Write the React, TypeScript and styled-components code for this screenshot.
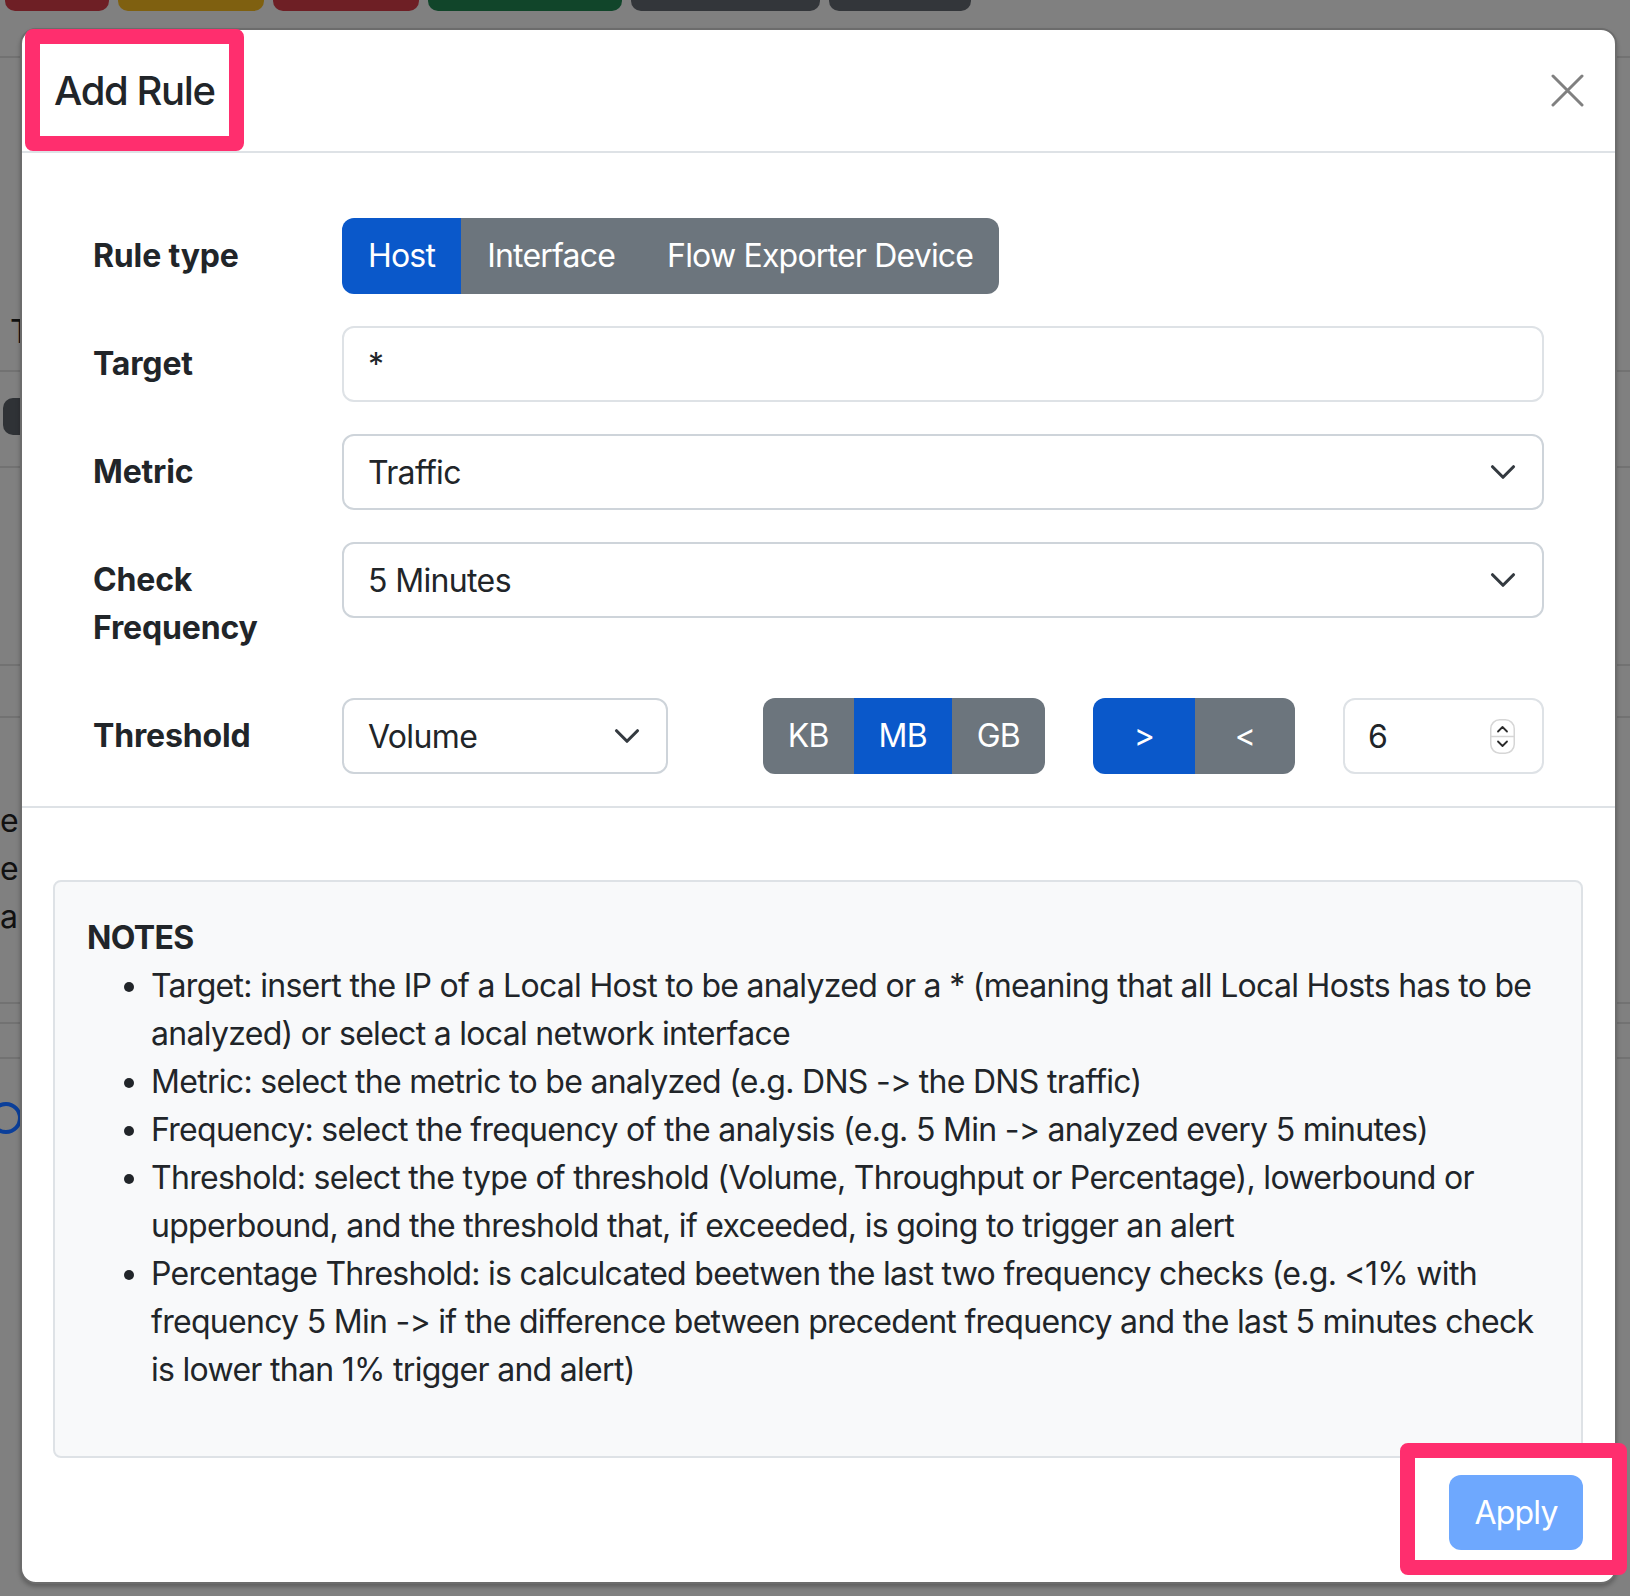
import React from "react";
import styled, { createGlobalStyle } from "styled-components";

const GlobalStyle = createGlobalStyle`
  html, body {
    margin: 0;
    padding: 0;
  }
  body {
    width: 1630px;
    height: 1596px;
    overflow: hidden;
    background: #808080;
    font-family: Inter, "Noto Sans", "Liberation Sans", sans-serif;
    color: #212529;
    -webkit-font-smoothing: antialiased;
  }
`;

// ---------- page behind the backdrop ----------

const Page = styled.div`
  position: relative;
  width: 1630px;
  height: 1596px;
  overflow: hidden;
  background: #808080;
`;

const BadgeRow = styled.div`
  display: flex;
  gap: 9px;
  padding-left: 5px;
  height: 11px;
`;

const Badge = styled.div<{ $color: string; $width: number }>`
  width: ${(p) => p.$width}px;
  height: 11px;
  background: ${(p) => p.$color};
  border-radius: 0 0 10px 10px;
`;

const Section = styled.div<{ $height: number }>`
  display: flow-root;
  height: ${(p) => p.$height}px;
  box-sizing: border-box;
  border-bottom: 2px solid #727272;
  font-size: 32px;
  line-height: 48px;
  color: #111;
`;

const BackText = styled.div`
  padding: 250px 0 0 10px;
`;

const BackPill = styled.div`
  margin: 26px 0 0 3px;
  width: 60px;
  height: 37px;
  border-radius: 10px;
  background: #2f3236;
`;

const BackParagraph = styled.div`
  padding-top: 79px;
  white-space: nowrap;
`;

const BackIcon = styled.div`
  margin: 43px 0 0 -10px;
  width: 24px;
  height: 24px;
  border: 4px solid #0b3f9a;
  border-radius: 50%;
`;

// ---------- modal ----------

const Modal = styled.div`
  position: absolute;
  left: 20px;
  top: 28px;
  width: 1597px;
  height: 1556px;
  box-sizing: border-box;
  background: #fff;
  border: 2px solid #6c6c6c;
  border-radius: 16px;
  display: flex;
  flex-direction: column;
  box-shadow: 0 3px 4px rgba(0, 0, 0, 0.25);
  overflow: hidden;
`;

const Header = styled.div`
  height: 121px;
  flex: none;
  display: flex;
  align-items: center;
  justify-content: space-between;
  padding: 0 31px 0 32px;
  border-bottom: 2px solid #dee2e6;
`;

const Title = styled.h5`
  margin: 0;
  font-size: 40px;
  font-weight: 500;
  line-height: 60px;
  letter-spacing: -0.035em;
`;

const CloseButton = styled.button`
  width: 33px;
  height: 33px;
  padding: 0;
  border: 0;
  background: none;
  display: flex;
`;

const Body = styled.div`
  flex: none;
  padding: 65px 71px 32px;
  display: flex;
  flex-direction: column;
  gap: 32px;
  border-bottom: 2px solid #dee2e6;
`;

const FormRow = styled.div`
  display: grid;
  grid-template-columns: 249px 1fr;
  align-items: start;
`;

const Label = styled.label`
  font-size: 32px;
  font-weight: 700;
  line-height: 48px;
  padding: 14px 24px 14px 0;
  letter-spacing: -0.005em;
`;

const ButtonGroup = styled.div`
  display: inline-flex;
  border-radius: 12px;
  overflow: hidden;
  justify-self: start;
`;

const GroupButton = styled.button<{ $active?: boolean; $width?: number }>`
  height: 76px;
  border: 0;
  margin: 0;
  padding: 0 26px;
  ${(p) => (p.$width ? `width: ${p.$width}px; padding: 0;` : "")}
  background: ${(p) => (p.$active ? "#0a58ca" : "#6c757d")};
  color: #fff;
  font-family: inherit;
  font-size: 32px;
  line-height: 48px;
  letter-spacing: -0.025em;
`;

const TextInput = styled.div`
  height: 76px;
  box-sizing: border-box;
  border: 2px solid #dee2e6;
  border-radius: 12px;
  padding: 0 24px;
  display: flex;
  align-items: center;
  font-size: 32px;
`;

const SelectBox = styled.div`
  height: 76px;
  box-sizing: border-box;
  border: 2px solid #ced4da;
  border-radius: 12px;
  padding: 0 25px 0 24px;
  display: flex;
  align-items: center;
  justify-content: space-between;
  font-size: 32px;
  letter-spacing: -0.02em;
`;

const ThresholdRow = styled.div`
  display: grid;
  grid-template-columns: 326px 1fr 202px 201px;
  column-gap: 48px;
  align-items: center;
`;

const UnitsGroup = styled(ButtonGroup)`
  justify-self: end;

  & > button {
    padding: 0 25px;
  }
`;

const NumberBox = styled.div`
  height: 76px;
  box-sizing: border-box;
  border: 2px solid #dee2e6;
  border-radius: 12px;
  padding: 0 27px 0 23px;
  display: flex;
  align-items: center;
  justify-content: space-between;
  font-size: 32px;
`;

const Footer = styled.div`
  flex: 1;
  display: flex;
  flex-direction: column;
  padding: 72px 32px 30px 31px;
`;

const NotesBox = styled.div`
  background: #f8f9fa;
  border: 2px solid #dee2e6;
  border-radius: 8px;
  padding: 32px 32px 62px;
  font-size: 32px;
  line-height: 48px;
  letter-spacing: -0.022em;
`;

const NotesTitle = styled.div`
  font-weight: 700;
  letter-spacing: -0.02em;
`;

const NotesList = styled.ul`
  margin: 0;
  padding-left: 64px;
`;

const ApplyRow = styled.div`
  display: flex;
  justify-content: flex-end;
  margin-top: 17px;
`;

const ApplyButton = styled.button`
  width: 134px;
  height: 75px;
  border: 0;
  border-radius: 12px;
  background: #6ea8fe;
  color: #fff;
  font-family: inherit;
  font-size: 32px;
  letter-spacing: -0.025em;
`;

// ---------- screenshot annotations ----------

const Highlight = styled.div<{ $x: number; $y: number; $w: number; $h: number }>`
  position: absolute;
  left: ${(p) => p.$x}px;
  top: ${(p) => p.$y}px;
  width: ${(p) => p.$w}px;
  height: ${(p) => p.$h}px;
  box-sizing: border-box;
  border: 15px solid #ff2e6e;
  border-radius: 8px;
`;

const Chevron = () => (
  <svg width="28" height="28" viewBox="0 0 16 16" fill="none">
    <path d="m2 5 6 6 6-6" stroke="#343a40" strokeWidth="1.8" strokeLinecap="round" strokeLinejoin="round" />
  </svg>
);

const Spinner = () => (
  <svg width="25" height="35" viewBox="0 0 25 35" fill="none">
    <rect x="0.75" y="0.75" width="23.5" height="33.5" rx="9" fill="#fff" stroke="#d6d6d6" strokeWidth="1.5" />
    <line x1="1" y1="17.5" x2="24" y2="17.5" stroke="#d6d6d6" strokeWidth="1.5" />
    <path d="M8 12.5 L12.5 8 L17 12.5" stroke="#2b2b2b" strokeWidth="1.8" strokeLinecap="round" strokeLinejoin="round" />
    <path d="M8 22.5 L12.5 27 L17 22.5" stroke="#2b2b2b" strokeWidth="1.8" strokeLinecap="round" strokeLinejoin="round" />
  </svg>
);

const CloseIcon = () => (
  <svg width="33" height="33" viewBox="0 0 33 33" fill="none">
    <path d="M2 2 L31 31 M31 2 L2 31" stroke="#808080" strokeWidth="3" strokeLinecap="round" />
  </svg>
);

const badges = [
  { color: "#6e1f25", width: 104 },
  { color: "#7f6010", width: 146 },
  { color: "#6e1f25", width: 146 },
  { color: "#11452a", width: 194 },
  { color: "#33363a", width: 189 },
  { color: "#33363a", width: 142 },
];

const notes = [
  "Target: insert the IP of a Local Host to be analyzed or a * (meaning that all Local Hosts has to be analyzed) or select a local network interface",
  "Metric: select the metric to be analyzed (e.g. DNS -> the DNS traffic)",
  "Frequency: select the frequency of the analysis (e.g. 5 Min -> analyzed every 5 minutes)",
  "Threshold: select the type of threshold (Volume, Throughput or Percentage), lowerbound or upperbound, and the threshold that, if exceeded, is going to trigger an alert",
  "Percentage Threshold: is calculcated beetwen the last two frequency checks (e.g. <1% with frequency 5 Min -> if the difference between precedent frequency and the last 5 minutes check is lower than 1% trigger and alert)",
];

export default function App() {
  return (
    <Page>
      <GlobalStyle />
      <BadgeRow>
        {badges.map((b, i) => (
          <Badge key={i} $color={b.color} $width={b.width} />
        ))}
      </BadgeRow>
      <Section $height={47} />
      <Section $height={314}>
        <BackText>Th</BackText>
      </Section>
      <Section $height={96}>
        <BackPill />
      </Section>
      <Section $height={198} />
      <Section $height={52} />
      <Section $height={286}>
        <BackParagraph>
          e name
          <br />
          e rule
          <br />
          an
        </BackParagraph>
      </Section>
      <Section $height={20} />
      <Section $height={35} />
      <BackIcon />

      <Modal>
        <Header>
          <Title>Add Rule</Title>
          <CloseButton aria-label="Close">
            <CloseIcon />
          </CloseButton>
        </Header>

        <Body>
          <FormRow>
            <Label>Rule type</Label>
            <ButtonGroup>
              <GroupButton $active>Host</GroupButton>
              <GroupButton>Interface</GroupButton>
              <GroupButton>Flow Exporter Device</GroupButton>
            </ButtonGroup>
          </FormRow>
          <FormRow>
            <Label>Target</Label>
            <TextInput>*</TextInput>
          </FormRow>
          <FormRow>
            <Label>Metric</Label>
            <SelectBox>
              <span>Traffic</span>
              <Chevron />
            </SelectBox>
          </FormRow>
          <FormRow>
            <Label>Check Frequency</Label>
            <SelectBox>
              <span>5 Minutes</span>
              <Chevron />
            </SelectBox>
          </FormRow>
          <FormRow>
            <Label>Threshold</Label>
            <ThresholdRow>
              <SelectBox>
                <span>Volume</span>
                <Chevron />
              </SelectBox>
              <UnitsGroup>
                <GroupButton>KB</GroupButton>
                <GroupButton $active>MB</GroupButton>
                <GroupButton>GB</GroupButton>
              </UnitsGroup>
              <ButtonGroup>
                <GroupButton $active $width={102}>&gt;</GroupButton>
                <GroupButton $width={100}>&lt;</GroupButton>
              </ButtonGroup>
              <NumberBox>
                <span>6</span>
                <Spinner />
              </NumberBox>
            </ThresholdRow>
          </FormRow>
        </Body>

        <Footer>
          <NotesBox>
            <NotesTitle>NOTES</NotesTitle>
            <NotesList>
              {notes.map((n, i) => (
                <li key={i}>{n}</li>
              ))}
            </NotesList>
          </NotesBox>
          <ApplyRow>
            <ApplyButton disabled>Apply</ApplyButton>
          </ApplyRow>
        </Footer>
      </Modal>

      <Highlight $x={25} $y={29} $w={219} $h={122} />
      <Highlight $x={1400} $y={1443} $w={227} $h={132} />
    </Page>
  );
}
